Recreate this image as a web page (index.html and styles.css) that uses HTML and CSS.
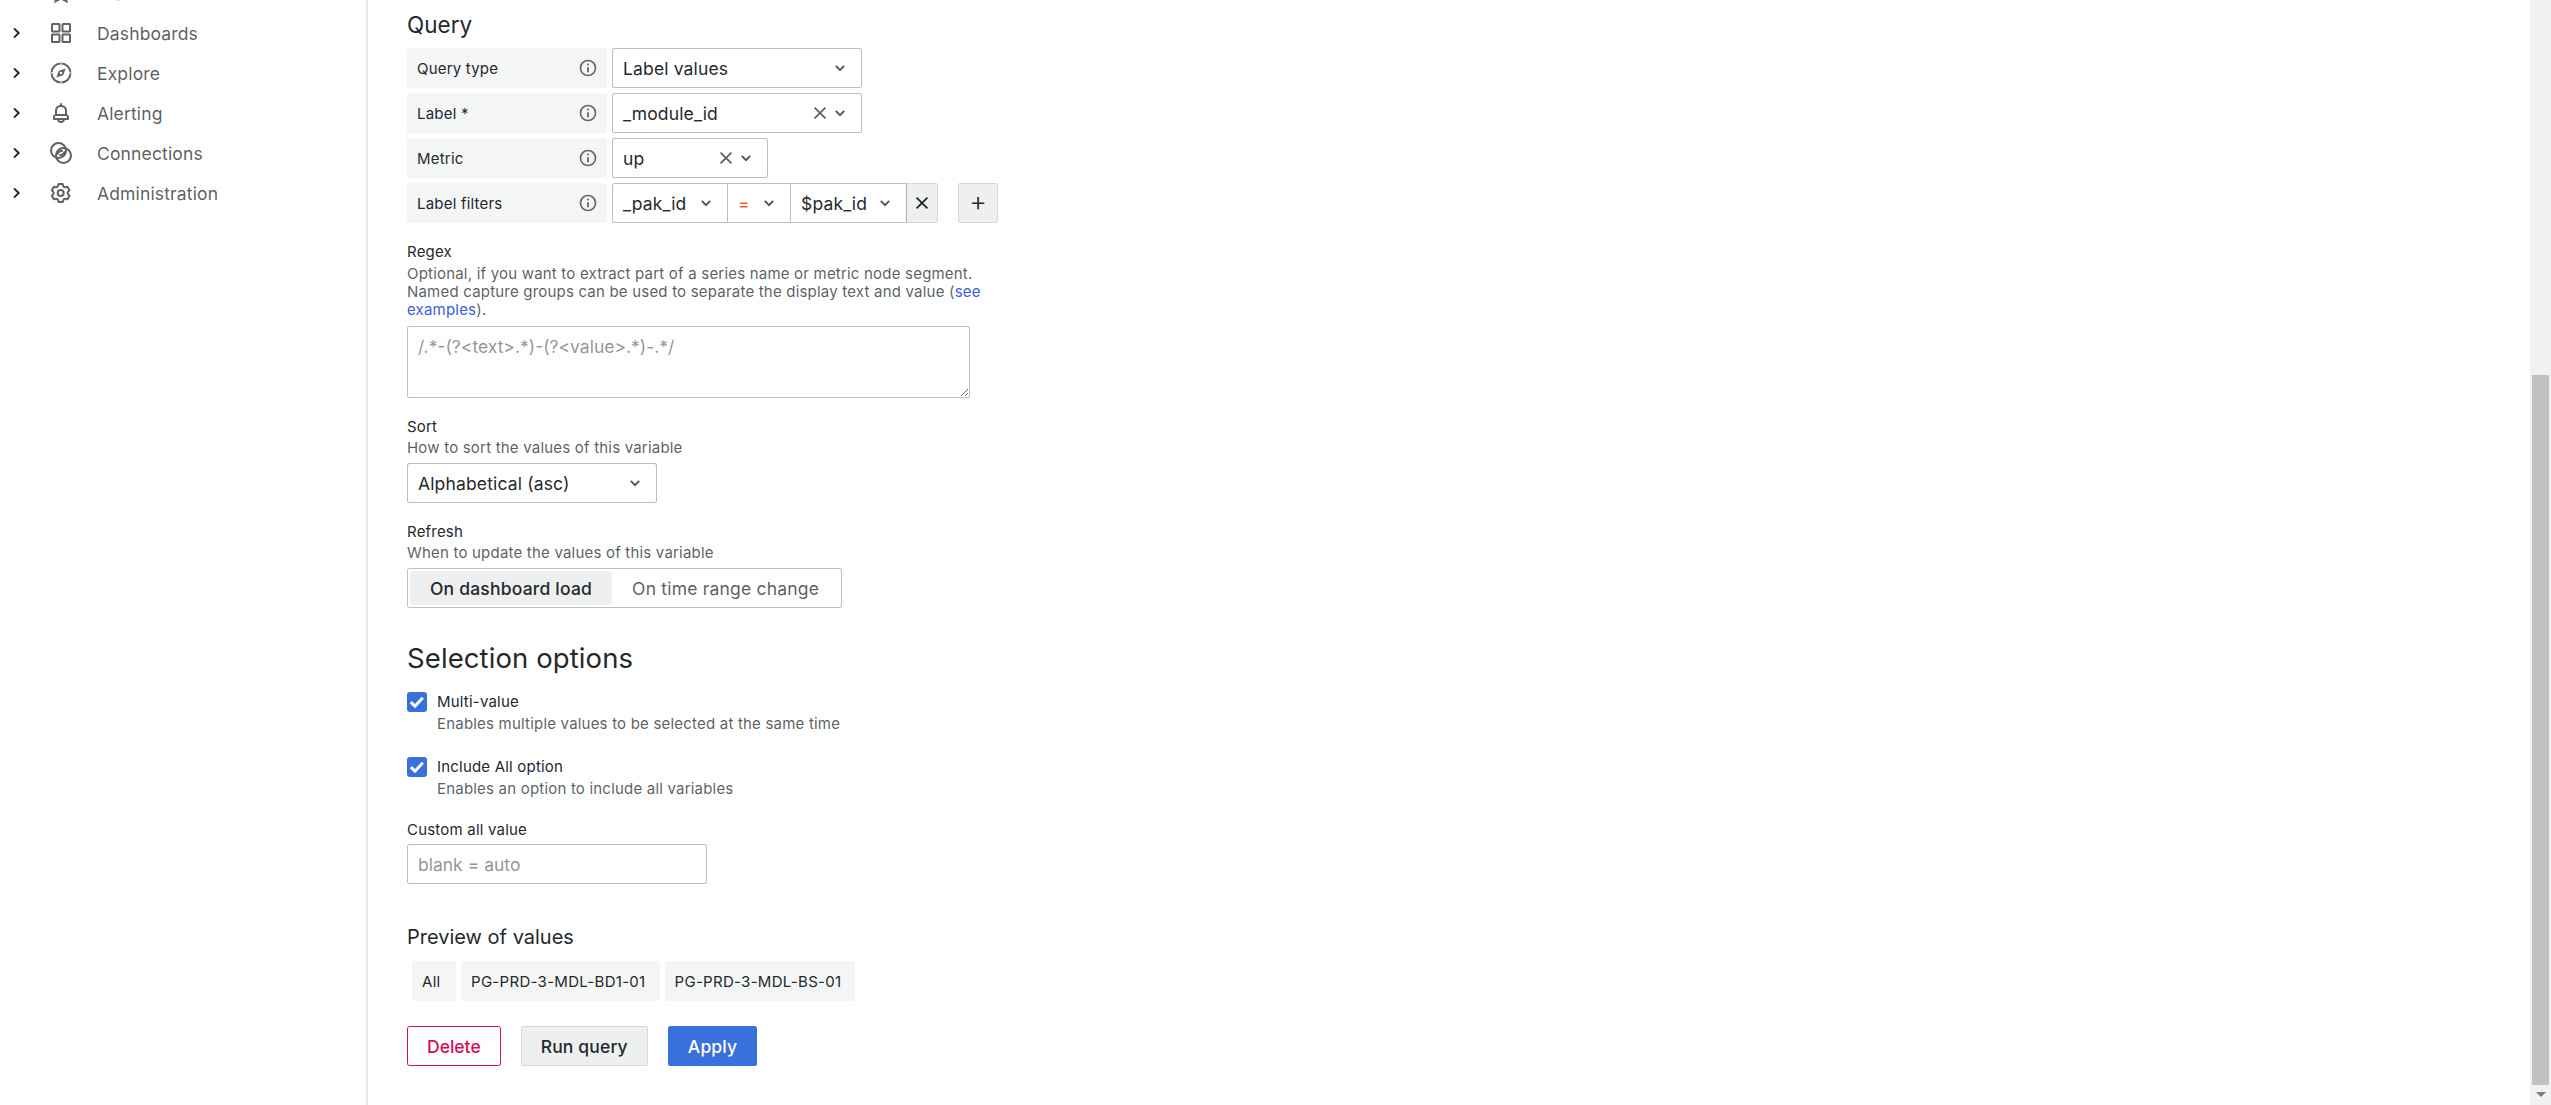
FILE: index.html
```html
<!DOCTYPE html>
<html lang="en">
<head>
<meta charset="utf-8">
<title>Variable</title>
<link rel="stylesheet" href="styles.css">
</head>
<body>
<svg class="defs" aria-hidden="true">
  <symbol id="chev-r" viewBox="0 0 24 24"><path d="M9 5l7 7-7 7" fill="none" stroke="currentColor" stroke-width="3"/></symbol>
  <symbol id="chev-d" viewBox="0 0 24 24"><path d="M7 9.500l5 5 5-5" fill="none" stroke="currentColor" stroke-width="2.400"/></symbol>
  <symbol id="x" viewBox="0 0 24 24"><path d="M5.500 5.500l13 13M18.500 5.500l-13 13" fill="none" stroke="currentColor" stroke-width="2.200"/></symbol>
  <symbol id="info" viewBox="0 0 24 24"><circle cx="12" cy="12" r="9" fill="none" stroke="currentColor" stroke-width="2"/><path d="M12 11v6" stroke="currentColor" stroke-width="2.200"/><circle cx="12" cy="7.800" r="1.300" fill="currentColor"/></symbol>
</svg>
<div class="app">
  <nav class="sidebar">
    <ul class="nav-list">
      <li class="nav-item">
        <span class="nav-chev"></span>
        <svg class="nav-icon" viewBox="0 0 24 24"><path d="M12 3l2.800 5.800 6.200.9-4.500 4.400 1.100 6.300L12 17.400l-5.600 3 1.100-6.300L3 9.700l6.200-.9z" fill="none" stroke="currentColor" stroke-width="2"/></svg>
        <span>Starred</span>
      </li>
      <li class="nav-item">
        <svg class="nav-chev"><use href="#chev-r"/></svg>
        <svg class="nav-icon" viewBox="0 0 24 24"><g fill="none" stroke="currentColor" stroke-width="2"><rect x="3" y="3" width="7.500" height="7.500" rx=".5"/><rect x="13.500" y="3" width="7.500" height="7.500" rx=".5"/><rect x="3" y="13.500" width="7.500" height="7.500" rx=".5"/><rect x="13.500" y="13.500" width="7.500" height="7.500" rx=".5"/></g></svg>
        <span>Dashboards</span>
      </li>
      <li class="nav-item">
        <svg class="nav-chev"><use href="#chev-r"/></svg>
        <svg class="nav-icon" viewBox="0 0 24 24"><circle cx="12" cy="12" r="9.500" fill="none" stroke="currentColor" stroke-width="2"/><path d="M12 1.500v2.500M12 20v2.500M1.500 12H4M20 12h2.500" stroke="#fff" stroke-width="1"/><path d="M16.600 7.400l-2.400 6.800-6.800 2.400 2.400-6.800zM12 10.800a1.200 1.200 0 100 2.400 1.200 1.200 0 000-2.400z" fill="currentColor" fill-rule="evenodd"/></svg>
        <span>Explore</span>
      </li>
      <li class="nav-item">
        <svg class="nav-chev"><use href="#chev-r"/></svg>
        <svg class="nav-icon" viewBox="0 0 24 24"><path fill="currentColor" d="M18,13.180V10a6,6,0,0,0-5-5.910V3a1,1,0,0,0-2,0V4.090A6,6,0,0,0,6,10v3.180A3,3,0,0,0,4,16v2a1,1,0,0,0,1,1H8.140a4,4,0,0,0,7.720,0H19a1,1,0,0,0,1-1V16A3,3,0,0,0,18,13.180ZM8,10a4,4,0,0,1,8,0v3H8Zm4,10a2,2,0,0,1-1.720-1h3.440A2,2,0,0,1,12,20Zm6-3H6V16a1,1,0,0,1,1-1H17a1,1,0,0,1,1,1Z"/></svg>
        <span>Alerting</span>
      </li>
      <li class="nav-item">
        <svg class="nav-chev"><use href="#chev-r"/></svg>
        <svg class="nav-icon" viewBox="0 0 24 24"><g fill="none" stroke="currentColor" stroke-width="2"><circle cx="9.500" cy="9.500" r="7.500"/><circle cx="14.500" cy="14.500" r="7.500"/><path d="M7.800 13.200l2.800-2.800a2 2 0 012.800 0l.2.2M16.200 10.800l-2.800 2.800a2 2 0 01-2.800 0l-.2-.2"/></g></svg>
        <span>Connections</span>
      </li>
      <li class="nav-item">
        <svg class="nav-chev"><use href="#chev-r"/></svg>
        <svg class="nav-icon" viewBox="0 0 24 24"><path fill="currentColor" d="M19.900,12.660a1,1,0,0,1,0-1.320L21.180,9.900a1,1,0,0,0,.12-1.170l-2-3.460a1,1,0,0,0-1.070-.48l-1.880.38a1,1,0,0,1-1.150-.66l-.61-1.830A1,1,0,0,0,13.640,2h-4a1,1,0,0,0-1,.68L8.080,4.510a1,1,0,0,1-1.150.66L5,4.790A1,1,0,0,0,4,5.270L2,8.730A1,1,0,0,0,2.100,9.900l1.270,1.440a1,1,0,0,1,0,1.320L2.100,14.100A1,1,0,0,0,2,15.270l2,3.460a1,1,0,0,0,1.070.48l1.880-.38a1,1,0,0,1,1.150.66l.61,1.830a1,1,0,0,0,1,.68h4a1,1,0,0,0,.95-.68l.61-1.830a1,1,0,0,1,1.150-.66l1.880.38a1,1,0,0,0,1.070-.48l2-3.460a1,1,0,0,0-.12-1.170ZM18.410,14l.8.9-1.280,2.220-1.180-.24a3,3,0,0,0-3.450,2L12.920,20H10.360L10,18.860a3,3,0,0,0-3.450-2l-1.180.24L4.070,14.890l.8-.9a3,3,0,0,0,0-4l-.8-.9L5.350,6.890l1.180.24a3,3,0,0,0,3.450-2L10.360,4h2.560l.38,1.140a3,3,0,0,0,3.450,2l1.180-.24,1.280,2.220-.8.9A3,3,0,0,0,18.410,14ZM11.640,8a4,4,0,1,0,4,4A4,4,0,0,0,11.640,8Zm0,6a2,2,0,1,1,2-2A2,2,0,0,1,11.640,14Z"/></svg>
        <span>Administration</span>
      </li>
    </ul>
  </nav>

  <main class="main">
    <h4 class="heading-query">Query</h4>
    <div class="query-rows">
      <div class="query-row">
        <div class="inline-label">Query type<svg class="info"><use href="#info"/></svg></div>
        <div class="select select-250"><span class="select-value">Label values</span><svg class="chev"><use href="#chev-d"/></svg></div>
      </div>
      <div class="query-row">
        <div class="inline-label">Label *<svg class="info"><use href="#info"/></svg></div>
        <div class="select select-250"><span class="select-value">_module_id</span><svg class="clear"><use href="#x"/></svg><svg class="chev"><use href="#chev-d"/></svg></div>
      </div>
      <div class="query-row">
        <div class="inline-label">Metric<svg class="info"><use href="#info"/></svg></div>
        <div class="select select-156"><span class="select-value">up</span><svg class="clear"><use href="#x"/></svg><svg class="chev"><use href="#chev-d"/></svg></div>
      </div>
      <div class="query-row">
        <div class="inline-label">Label filters<svg class="info"><use href="#info"/></svg></div>
        <div class="filter">
          <div class="select seg seg-a"><span class="select-value">_pak_id</span><svg class="chev"><use href="#chev-d"/></svg></div>
          <div class="select seg seg-b"><span class="select-value op">=</span><svg class="chev"><use href="#chev-d"/></svg></div>
          <div class="select seg seg-c"><span class="select-value">$pak_id</span><svg class="chev"><use href="#chev-d"/></svg></div>
          <button class="seg-remove" type="button"><svg class="clear-dark"><use href="#x"/></svg></button>
        </div>
        <button class="add-btn" type="button">+</button>
      </div>
    </div>

    <div class="field">
      <div class="field-label">Regex</div>
      <div class="field-desc field-desc-long">Optional, if you want to extract part of a series name or metric node segment.<br>Named capture groups can be used to separate the display text and value (<a class="link" href="#">see examples</a>).</div>
      <textarea class="textarea" placeholder="/.*-(?<text>.*)-(?<value>.*)-.*/"></textarea>
    </div>

    <div class="field">
      <div class="field-label">Sort</div>
      <div class="field-desc">How to sort the values of this variable</div>
      <div class="select select-250 field-control"><span class="select-value">Alphabetical (asc)</span><svg class="chev"><use href="#chev-d"/></svg></div>
    </div>

    <div class="field">
      <div class="field-label">Refresh</div>
      <div class="field-desc">When to update the values of this variable</div>
      <div class="radio-group field-control">
        <span class="radio active">On dashboard load</span>
        <span class="radio">On time range change</span>
      </div>
    </div>

    <h3 class="heading-lg">Selection options</h3>
    <div class="check-row">
      <span class="checkbox"><svg viewBox="0 0 20 20"><path d="M3.800 10.200L8 14.200l7.800-8.400" fill="none" stroke="#fff" stroke-width="3"/></svg></span>
      <div><div class="field-label">Multi-value</div><div class="field-desc field-desc-check">Enables multiple values to be selected at the same time</div></div>
    </div>
    <div class="check-row check-row-next">
      <span class="checkbox"><svg viewBox="0 0 20 20"><path d="M3.800 10.200L8 14.200l7.800-8.400" fill="none" stroke="#fff" stroke-width="3"/></svg></span>
      <div><div class="field-label">Include All option</div><div class="field-desc field-desc-check">Enables an option to include all variables</div></div>
    </div>

    <div class="field field-custom">
      <div class="field-label">Custom all value</div>
      <input class="input" type="text" placeholder="blank = auto">
    </div>

    <h4 class="heading-preview">Preview of values</h4>
    <div class="chips">
      <span class="chip">All</span>
      <span class="chip">PG-PRD-3-MDL-BD1-01</span>
      <span class="chip">PG-PRD-3-MDL-BS-01</span>
    </div>

    <div class="actions">
      <button class="btn btn-delete" type="button">Delete</button>
      <button class="btn btn-secondary" type="button">Run query</button>
      <button class="btn btn-primary" type="button">Apply</button>
    </div>
  </main>

  <div class="scrollbar">
    <div class="scroll-thumb"></div>
    <div class="scroll-arrow"></div>
  </div>
</div>
</body>
</html>
```
FILE: styles.css
```css
* { box-sizing: border-box; }
html, body { margin: 0; height: 100%; overflow: hidden; background: #fff; }
body {
  font-family: Inter, "Noto Sans", "Liberation Sans", sans-serif;
  font-size: 17.5px;
  color: #24292e;
}
.defs { display: none; }
.app { display: flex; height: 1105px; }

/* Sidebar */
.sidebar {
  flex: none;
  width: 368px;
  height: 100%;
  overflow: hidden;
  border-right: 2px solid #e6e7e8;
}
.nav-list { list-style: none; margin: -27px 0 0; padding: 0; }
.nav-item {
  display: flex;
  align-items: center;
  height: 40px;
  padding-left: 8px;
  color: rgba(36, 41, 46, 0.75);
  font-size: 17.5px;
  letter-spacing: 0.15px;
}
.nav-chev { flex: none; width: 16px; height: 16px; color: #24292e; }
.nav-icon { flex: none; width: 24px; height: 24px; margin: 0 24px 0 25px; color: #5f6266; }

/* Main */
.main { flex: 1; min-width: 0; padding: 10px 0 0 39px; }
.heading-query { margin: 0 0 8px; font-size: 22.5px; font-weight: 400; line-height: 30px; }
.heading-preview { margin: 38px 0 0; font-size: 20px; font-weight: 400; line-height: 30px; }
.heading-lg { margin: 32px 0 16px; font-size: 27.5px; font-weight: 400; line-height: 36px; letter-spacing: 0.1px; }

.query-rows { display: flex; flex-direction: column; gap: 5px; }
.query-row { display: flex; align-items: center; height: 40px; }
.inline-label {
  flex: none;
  display: flex;
  align-items: center;
  justify-content: space-between;
  width: 200px;
  height: 40px;
  margin-right: 5px;
  padding: 0 9px 0 10px;
  background: #f4f5f5;
  border-radius: 2.5px;
  font-size: 15px;
  font-weight: 400;
  letter-spacing: 0.2px;
}
.info { width: 20px; height: 20px; color: #65686b; }

.select {
  display: flex;
  align-items: center;
  height: 40px;
  padding: 0 11px 0 10px;
  background: #fff;
  border: 1px solid rgba(36, 41, 46, 0.3);
  border-radius: 2.5px;
  letter-spacing: 0.15px;
}
.select-250 { width: 250px; }
.select-156 { width: 156px; }
.select-value { flex: 1; min-width: 0; white-space: nowrap; }
.chev { flex: none; width: 20px; height: 20px; color: #53565a; }
.clear { flex: none; width: 20px; height: 20px; color: #5f6266; }

.filter { display: flex; height: 40px; }
.seg { border-radius: 0; margin-right: -1px; }
.seg-a { width: 116px; border-radius: 2.5px 0 0 2.5px; }
.seg-b { width: 64px; }
.seg-c { width: 117px; }
.op { color: #ff5f2e; }
.seg-remove {
  display: flex;
  align-items: center;
  justify-content: center;
  width: 32px;
  height: 40px;
  padding: 0;
  background: #eeefef;
  border: 1px solid rgba(36, 41, 46, 0.12);
  border-left: 1px solid rgba(36, 41, 46, 0.3);
  border-radius: 0 2.5px 2.5px 0;
  color: #24292e;
}
.clear-dark { width: 20px; height: 20px; }
.add-btn {
  width: 40px;
  height: 40px;
  margin-left: 20px;
  padding: 0 0 3px;
  background: #eeefef;
  border: 1px solid rgba(36, 41, 46, 0.12);
  border-radius: 2.5px;
  color: #24292e;
  font: 300 27px/1 Inter, sans-serif;
}

/* Fields */
.field { margin-top: 19px; }
.field-custom { margin-top: 22px; }
.field-label { font-size: 15px; font-weight: 400; line-height: 20px; letter-spacing: 0.2px; }
.field-desc { margin-top: 2px; font-size: 15px; line-height: 18px; letter-spacing: 0.2px; color: rgba(36, 41, 46, 0.75); }
.field-desc-long { margin-top: 3px; width: 580px; }
.field-desc-check { margin-top: 3px; }
.link { color: #3d5ce0; text-decoration: none; }
.field-control { margin-top: 6px; }
.textarea {
  display: block;
  width: 563px;
  height: 72px;
  margin-top: 7px;
  padding: 7px 10px;
  border: 1px solid rgba(36, 41, 46, 0.3);
  border-radius: 2.5px;
  background: #fff;
  font: 400 17.5px/1.5 Inter, sans-serif;
  color: #24292e;
  resize: vertical;
  outline: none;
}
.textarea::placeholder, .input::placeholder { color: rgba(36, 41, 46, 0.5); opacity: 1; }
.input {
  display: block;
  width: 300px;
  height: 40px;
  margin-top: 4px;
  padding: 0 10px;
  border: 1px solid rgba(36, 41, 46, 0.3);
  border-radius: 2.5px;
  background: #fff;
  font: 400 17.5px Inter, sans-serif;
  outline: none;
}

/* Radio */
.radio-group {
  display: inline-flex;
  height: 40px;
  padding: 2px;
  border: 1px solid rgba(36, 41, 46, 0.3);
  border-radius: 2.5px;
}
.radio {
  display: flex;
  align-items: center;
  padding: 0 20px;
  border-radius: 2.5px;
  color: rgba(36, 41, 46, 0.75);
  white-space: nowrap;
  letter-spacing: 0.2px;
}
.radio.active { background: #eeefef; color: #24292e; font-weight: 500; }

/* Checkboxes */
.check-row { display: flex; gap: 10px; }
.check-row-next { margin-top: 24px; }
.checkbox { flex: none; width: 20px; height: 20px; background: #3871dc; border-radius: 3px; }
.checkbox svg { display: block; width: 20px; height: 20px; }

/* Preview */
.chips { display: flex; gap: 5px; margin: 9px 0 0 5px; }
.chip {
  display: flex;
  align-items: center;
  min-width: 44px;
  height: 40px;
  padding: 0 14px 0 10px;
  background: #f4f5f5;
  border-radius: 2.5px;
  font-size: 15px;
  font-weight: 400;
  letter-spacing: 0.3px;
}

/* Buttons */
.actions { display: flex; gap: 20px; margin-top: 25px; }
.btn {
  height: 40px;
  padding: 0 19px;
  border: 1px solid transparent;
  border-radius: 2.5px;
  font: 500 17.5px Inter, sans-serif;
  letter-spacing: 0.15px;
}
.btn-delete { background: #fff; border-color: #d10e5c; color: #d10e5c; letter-spacing: 0; }
.btn-secondary { background: #eeefef; border-color: rgba(36, 41, 46, 0.12); color: #24292e; }
.btn-primary { background: #3871dc; color: #fff; }

/* Scrollbar */
.scrollbar {
  flex: none;
  width: 21px;
  height: 100%;
  padding: 375px 2px 0;
  background: #f1f1f1;
}
.scroll-thumb { height: 710px; background: #c1c1c1; }
.scroll-arrow {
  width: 0;
  height: 0;
  margin: 7px auto 0;
  border-left: 5px solid transparent;
  border-right: 5px solid transparent;
  border-top: 5px solid #7d7d7d;
}
```
